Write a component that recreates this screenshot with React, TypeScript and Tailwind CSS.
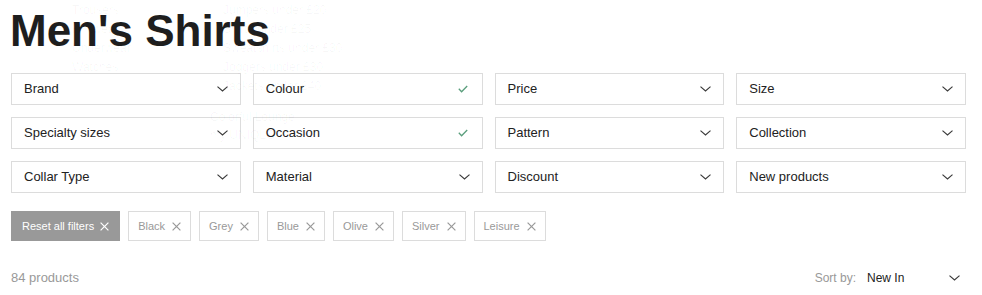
const filters = [
  { label: "Brand" },
  { label: "Colour", active: true },
  { label: "Price" },
  { label: "Size" },
  { label: "Specialty sizes" },
  { label: "Occasion", active: true },
  { label: "Pattern" },
  { label: "Collection" },
  { label: "Collar Type" },
  { label: "Material" },
  { label: "Discount" },
  { label: "New products" },
];

const chips = ["Black", "Grey", "Blue", "Olive", "Silver", "Leisure"];

function Chevron() {
  return (
    <svg width="11" height="6" viewBox="0 0 11 6" fill="none" aria-hidden="true">
      <path d="M0.5 0.6l5 4.4 5-4.4" stroke="#3a3a3a" strokeWidth="1.15" />
    </svg>
  );
}

function Check() {
  return (
    <svg width="10" height="8" viewBox="0 0 10 8" fill="none" aria-hidden="true">
      <path d="M0.8 3.8l2.8 2.9L9.2 1" stroke="#5a9e7c" strokeWidth="1.3" />
    </svg>
  );
}

function Cross({ color }: { color: string }) {
  return (
    <svg width="9" height="9" viewBox="0 0 9 9" fill="none" aria-hidden="true">
      <path d="M0.6 0.6l7.8 7.8M8.4 0.6L0.6 8.4" stroke={color} strokeWidth="1.2" />
    </svg>
  );
}

// faded menu layer that sits over the page
function GhostMenu() {
  const line = "absolute whitespace-nowrap text-[12px] leading-[19px] text-black/[0.035]";
  return (
    <div className="pointer-events-none absolute inset-0 z-10">
      <div className="absolute left-[72px] top-[1px]">
        {["Trousers", "Knitwear", "Underwear", "Watches"].map((t, i) => (
          <div key={t} className={line} style={{ top: i * 19 }}>
            {t}
          </div>
        ))}
      </div>
      <div className="absolute left-[223px] top-[1px]">
        {["Jumpers under £20", "Shirts under £25", "Sweatshirts under £30", "Joggers under £30", "Jackets under £40"].map(
          (t, i) => (
            <div key={t} className={line} style={{ top: i * 19 }}>
              {t}
            </div>
          ),
        )}
      </div>
      <div className="absolute left-[210px] top-[108px]">
        <div className={line}>Colorful Lounge</div>
        <div className={line} style={{ top: 18 }}>
          my UNIQLO
        </div>
      </div>
    </div>
  );
}

export default function App() {
  return (
    <div className="relative h-[295px] w-[982px] overflow-hidden bg-white font-['Liberation_Sans',Arial,sans-serif] text-[#222]">
      <GhostMenu />
      <div className="pl-[11px] pr-[16px] pt-[9px]">
        <h1 className="-ml-px text-[44px] font-bold leading-[43px] text-[#1e1e1e]">Men's Shirts</h1>

        <div className="mt-[21px] grid grid-cols-4 gap-x-[12px] gap-y-[12px]">
          {filters.map((f) => (
            <button
              key={f.label}
              type="button"
              className="flex h-[32px] items-center justify-between border border-[#dcdcdc] bg-white pl-[12px] pr-[12px] text-left text-[13px] text-[#222]"
            >
              <span>{f.label}</span>
              {f.active ? (
                <span className="pr-[2px]">
                  <Check />
                </span>
              ) : (
                <Chevron />
              )}
            </button>
          ))}
        </div>

        <div className="mt-[18px] flex items-center gap-[8px]">
          <button
            type="button"
            className="flex h-[30px] items-center gap-[6px] bg-[#999] px-[11px] text-[11px] text-white"
          >
            Reset all filters
            <Cross color="#fff" />
          </button>
          {chips.map((c) => (
            <button
              key={c}
              type="button"
              className="flex h-[30px] items-center gap-[7px] border border-[#dcdcdc] bg-white px-[9px] text-[11px] text-[#999]"
            >
              {c}
              <Cross color="#999" />
            </button>
          ))}
        </div>

        <div className="mt-[22px] flex h-[30px] items-center justify-between">
          <span className="text-[13px] text-[#999]">84 products</span>
          <div className="flex items-center gap-[11px] text-[12px]">
            <span className="text-[#999]">Sort by:</span>
            <div className="flex w-[99px] items-center justify-between pr-[6px] text-[#222]">
              <span>New In</span>
              <Chevron />
            </div>
          </div>
        </div>
      </div>
    </div>
  );
}
